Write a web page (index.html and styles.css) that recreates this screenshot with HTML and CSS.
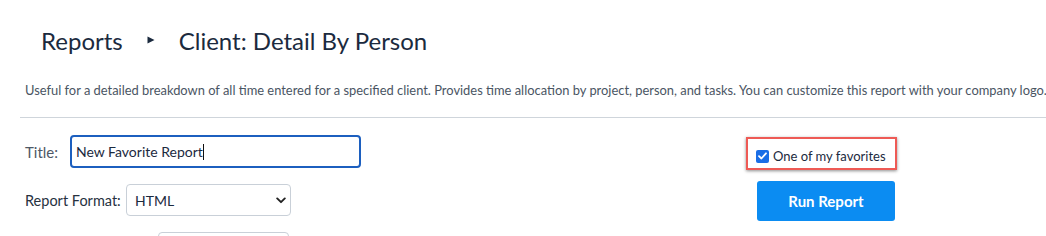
FILE: index.html
```html
<!DOCTYPE html>
<html>
<head>
<meta charset="utf-8">
<link rel="stylesheet" href="styles.css">
</head>
<body>
<div class="page">
  <h1 class="crumbs">
    <span class="crumb">Reports</span>
    <svg class="sep" width="8" height="8" viewBox="0 0 8 8"><path d="M0.5 0.5 L7.5 4 L0.5 7.5 Z" fill="#1b2a3e"/></svg>
    <span class="crumb">Client: Detail By Person</span>
  </h1>
  <p class="desc">Useful for a detailed breakdown of all time entered for a specified client. Provides time allocation by project, person, and tasks. You can customize this report with your company logo.</p>
  <div class="rule"></div>
  <div class="form">
    <div class="left">
      <div class="row title-row">
        <label class="title-label">Title:</label>
        <div class="text-input">New Favorite Report<span class="caret"></span></div>
      </div>
      <div class="row format-row">
        <label class="format-label">Report Format:</label>
        <div class="select">
          <span>HTML</span>
          <svg class="chev" width="10" height="7" viewBox="0 0 10 7"><path d="M1.2 1.4 L5 5.2 L8.8 1.4" fill="none" stroke="#222" stroke-width="1.9" stroke-linecap="round" stroke-linejoin="round"/></svg>
        </div>
      </div>
      <div class="row partial-row">
        <div class="select partial"></div>
      </div>
    </div>
    <div class="right">
      <div class="fav">
        <span class="check">
          <svg width="9" height="8" viewBox="0 0 9 8"><path d="M1 4.2 L3.4 6.5 L8 1.3" fill="none" stroke="#fff" stroke-width="1.8" stroke-linecap="round" stroke-linejoin="round"/></svg>
        </span>
        <span class="fav-text">One of my favorites</span>
      </div>
      <button class="run">Run Report</button>
    </div>
  </div>
</div>
</body>
</html>
```

FILE: styles.css
```css
html, body {
  margin: 0;
  padding: 0;
  background: #ffffff;
}
html {
  height: 236px;
  overflow: hidden;
}
body {
  font-family: Lato, "Open Sans", sans-serif;
  color: #1f2d3d;
}
.page {
  padding-left: 20px;
}
.crumbs {
  margin: 0;
  padding: 27px 0 0 21px;
  height: 28px;
  font-weight: 400;
  font-size: 24px;
  line-height: 28px;
  color: #1b2a3e;
  display: flex;
  align-items: center;
}
.sep {
  margin: 0 24px 0 24px;
  position: relative;
  top: -1px;
}
.desc {
  margin: 27px 0 0 5px;
  font-size: 12.9px;
  line-height: 16px;
  color: #4a5563;
  white-space: nowrap;
}
.rule {
  margin-top: 19px;
  height: 1px;
  background: #cfd5db;
}
.form {
  display: flex;
  padding-top: 17px;
}
.left {
  width: 726px;
  display: flex;
  flex-direction: column;
}
.row {
  display: flex;
  align-items: center;
}
.title-label {
  margin-left: 5px;
  width: 45px;
  font-size: 15px;
  color: #4e5866;
}
.text-input {
  width: 283px;
  height: 29px;
  border: 2px solid #1c5fbf;
  border-radius: 4px;
  display: flex;
  align-items: center;
  padding-left: 4px;
  font-size: 14px;
  color: #1b2a3e;
}
.caret {
  display: inline-block;
  width: 1px;
  height: 16px;
  background: #111;
}
.format-row {
  margin-top: 16px;
}
.format-label {
  margin-left: 5px;
  width: 101px;
  font-size: 14.5px;
  color: #27323f;
}
.select {
  width: 165px;
  height: 32px;
  box-sizing: border-box;
  border: 1px solid #c9d0d8;
  border-radius: 4px;
  display: flex;
  align-items: center;
  justify-content: space-between;
  padding: 0 4px 0 8px;
  font-size: 14px;
  color: #1b2a3e;
}
.partial-row {
  margin-top: 16px;
  padding-left: 138px;
}
.select.partial {
  width: 131px;
}
.right {
  display: flex;
  flex-direction: column;
  align-items: flex-start;
}
.fav {
  box-sizing: border-box;
  width: 151px;
  height: 33px;
  margin-top: 2px;
  border: 2px solid #ee5a55;
  box-shadow: 0 1px 3px rgba(0,0,0,0.45);
  display: flex;
  align-items: center;
  padding-left: 8px;
  padding-top: 5px;
}
.check {
  width: 13px;
  height: 13px;
  border-radius: 2px;
  background: #1a6ee6;
  display: flex;
  align-items: center;
  justify-content: center;
}
.fav-text {
  margin-left: 4px;
  font-size: 13px;
  color: #1b2a3e;
}
.run {
  margin-top: 11px;
  margin-left: 11px;
  width: 138px;
  height: 40px;
  border: none;
  border-radius: 3px;
  background: #0b8cf2;
  color: #ffffff;
  font-family: Lato, sans-serif;
  font-weight: 700;
  font-size: 15px;
}
```
